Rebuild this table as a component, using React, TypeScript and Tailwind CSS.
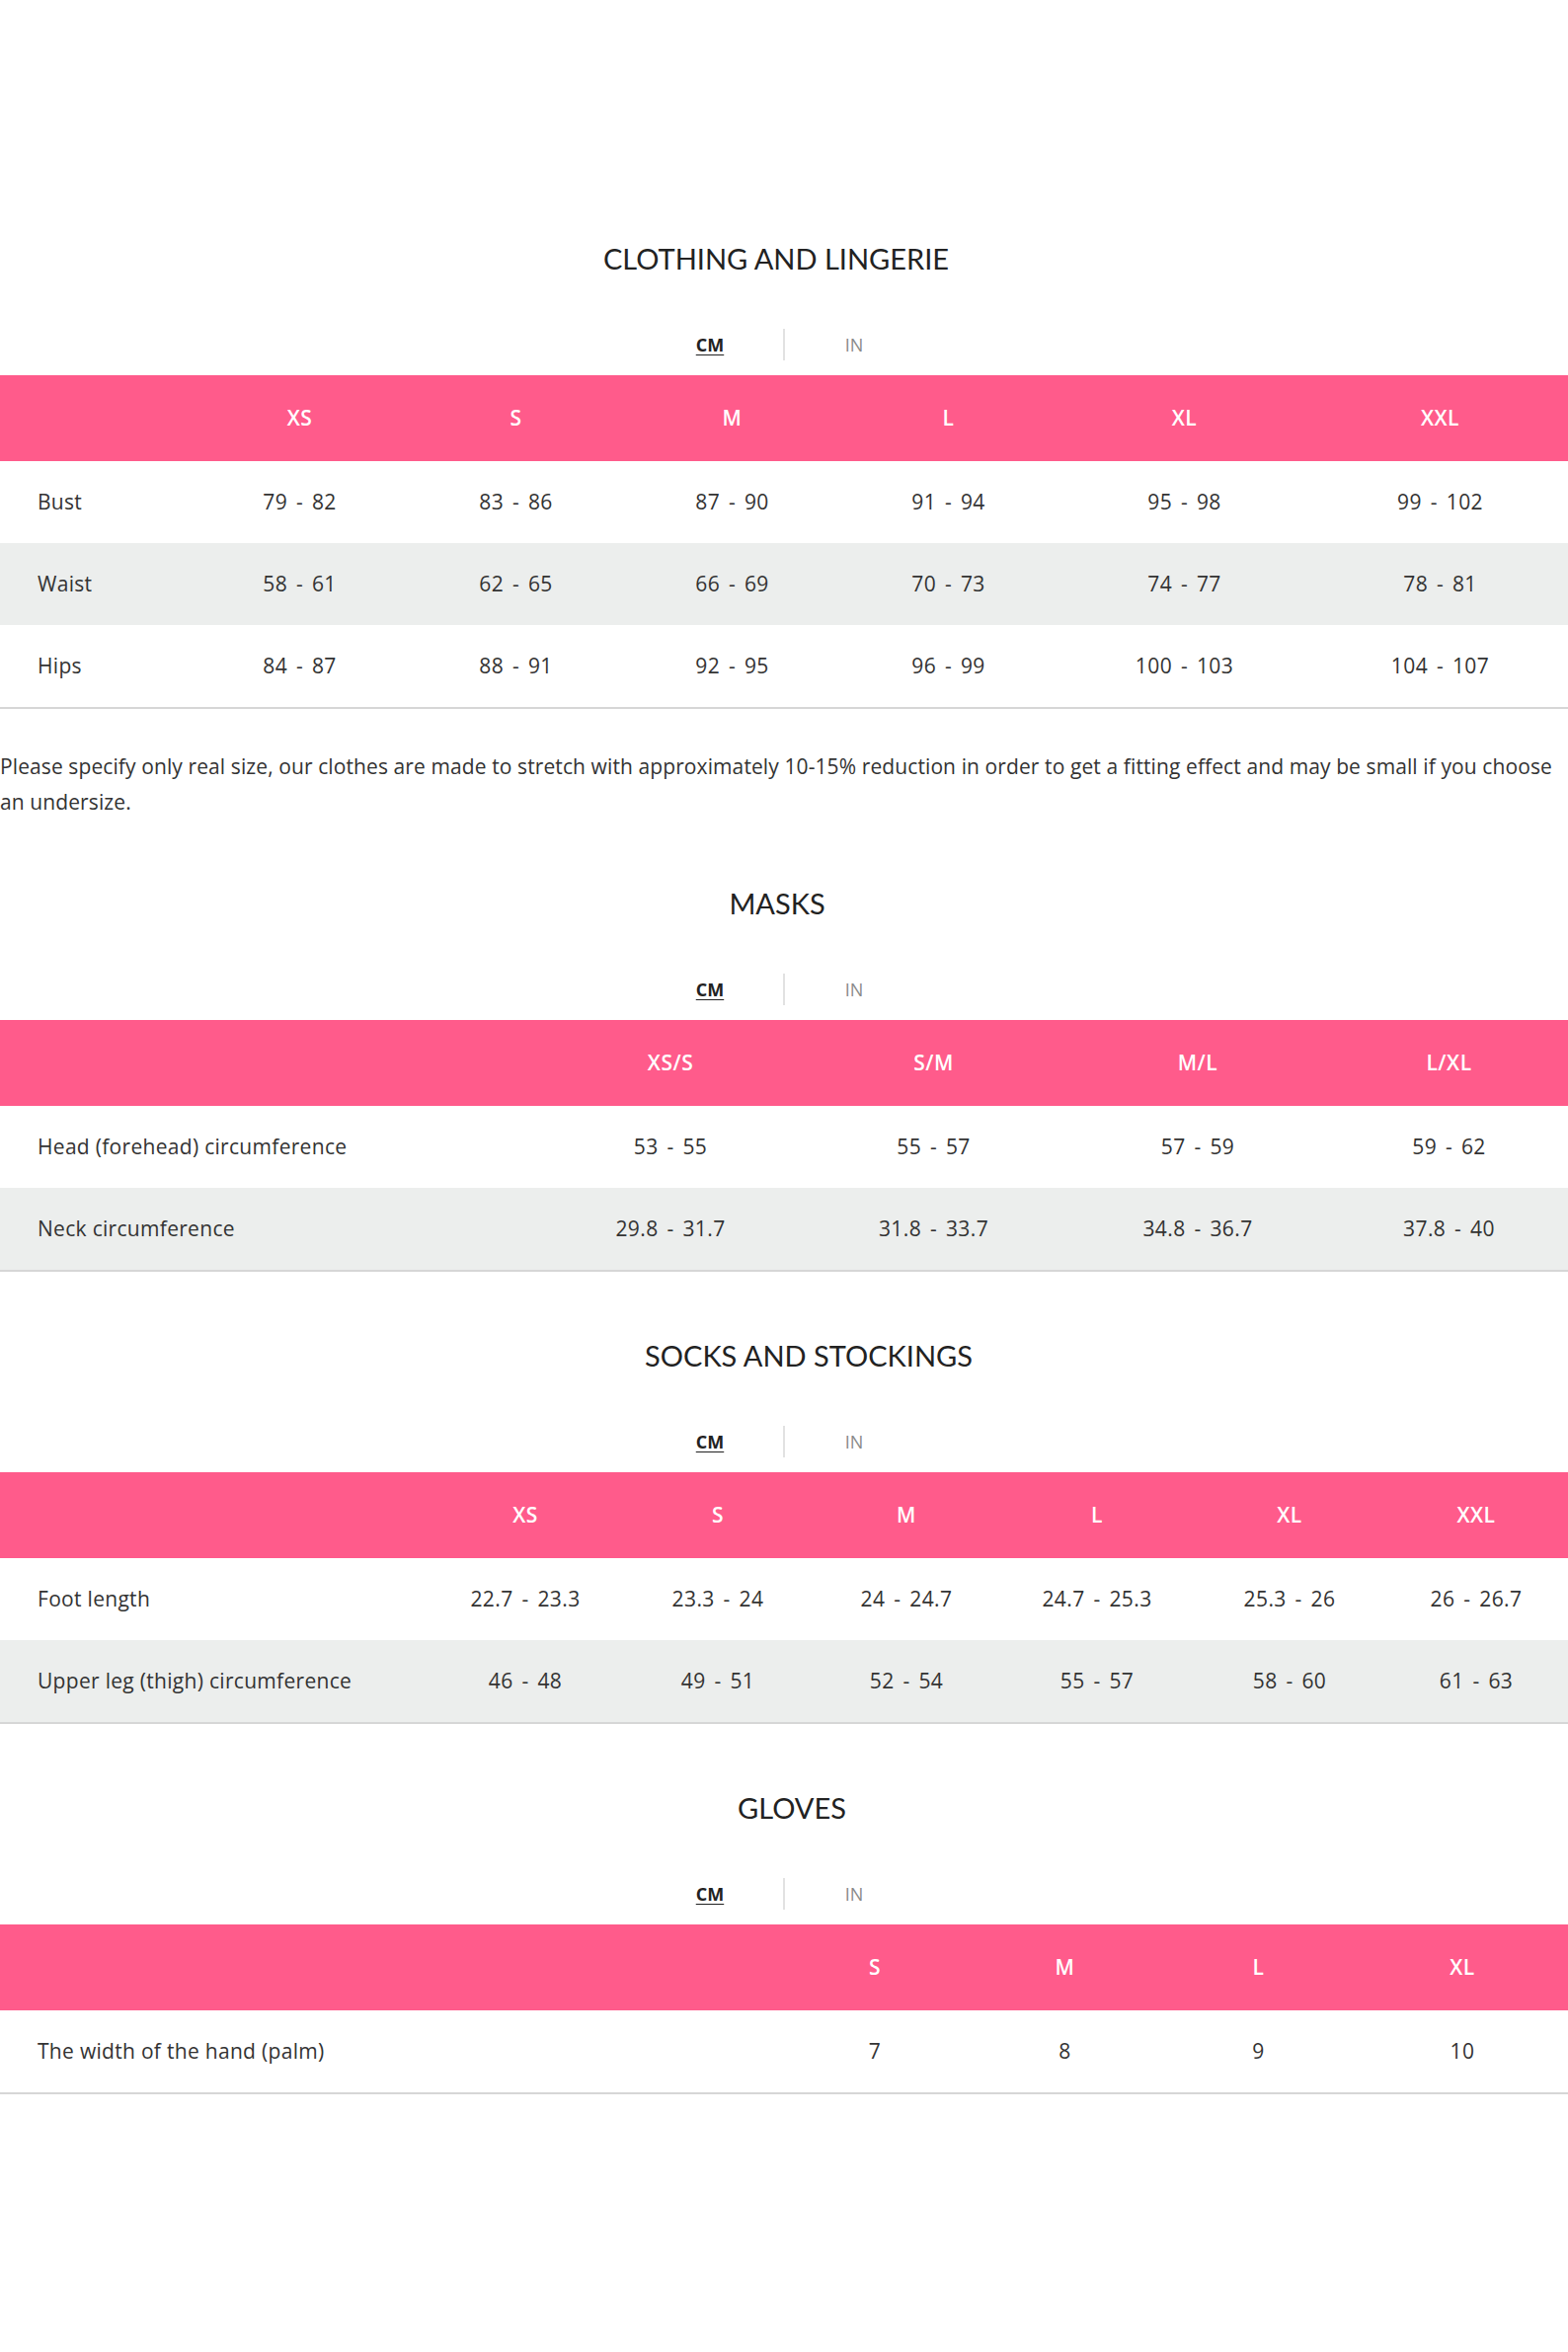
import React from "react";

type Section = {
  title: string;
  titleClass: string;
  cols: string;
  headers: string[];
  rows: { label: string; values: string[] }[];
  note?: boolean;
};

const sections: Section[] = [
  {
    title: "CLOTHING AND LINGERIE",
    titleClass: "pr-[16px]",
    cols: "grid-cols-[194px_219px_219px_219px_219px_259px_1fr]",
    headers: ["XS", "S", "M", "L", "XL", "XXL"],
    rows: [
      { label: "Bust", values: ["79 - 82", "83 - 86", "87 - 90", "91 - 94", "95 - 98", "99 - 102"] },
      { label: "Waist", values: ["58 - 61", "62 - 65", "66 - 69", "70 - 73", "74 - 77", "78 - 81"] },
      { label: "Hips", values: ["84 - 87", "88 - 91", "92 - 95", "96 - 99", "100 - 103", "104 - 107"] },
    ],
    note: true,
  },
  {
    title: "MASKS",
    titleClass: "pr-[14px]",
    cols: "grid-cols-[546px_266px_267px_268px_1fr]",
    headers: ["XS/S", "S/M", "M/L", "L/XL"],
    rows: [
      { label: "Head (forehead) circumference", values: ["53 - 55", "55 - 57", "57 - 59", "59 - 62"] },
      { label: "Neck circumference", values: ["29.8 - 31.7", "31.8 - 33.7", "34.8 - 36.7", "37.8 - 40"] },
    ],
  },
  {
    title: "SOCKS AND STOCKINGS",
    titleClass: "pl-[50px]",
    cols: "grid-cols-[434px_196px_194px_188px_198px_192px_1fr]",
    headers: ["XS", "S", "M", "L", "XL", "XXL"],
    rows: [
      { label: "Foot length", values: ["22.7 - 23.3", "23.3 - 24", "24 - 24.7", "24.7 - 25.3", "25.3 - 26", "26 - 26.7"] },
      { label: "Upper leg (thigh) circumference", values: ["46 - 48", "49 - 51", "52 - 54", "55 - 57", "58 - 60", "61 - 63"] },
    ],
  },
  {
    title: "GLOVES",
    titleClass: "pl-[16px]",
    cols: "grid-cols-[790px_192px_193px_199px_1fr]",
    headers: ["S", "M", "L", "XL"],
    rows: [{ label: "The width of the hand (palm)", values: ["7", "8", "9", "10"] }],
  },
];

function Toggle() {
  return (
    <div className="flex justify-center items-center h-[32px]">
      <div className="w-[148px] text-center text-[18px] font-bold text-[#222] underline underline-offset-[3px]">CM</div>
      <div className="w-[2px] h-[32px] bg-[#e2e2e2]" />
      <div className="w-[148px] pr-[8px] text-center text-[18px] text-[#8a8a8a]">IN</div>
    </div>
  );
}

function SizeTable({ s }: { s: Section }) {
  return (
    <div className="border-b-2 border-[#d6d6d6]">
      <div className={`grid ${s.cols} h-[87px] items-center bg-[#ff5b8b] text-white text-[21px] tracking-[0.5px] font-semibold`}>
        <div />
        {s.headers.map((h) => (
          <div key={h} className="text-center">
            {h}
          </div>
        ))}
      </div>
      {s.rows.map((r, i) => (
        <div
          key={r.label}
          className={`grid ${s.cols} h-[83px] items-center text-[21px] text-[#333] ${i % 2 === 1 ? "bg-[#eceeed]" : "bg-white"}`}
        >
          <div className="pl-[38px] whitespace-nowrap tracking-[0.3px]">{r.label}</div>
          {r.values.map((v, j) => (
            <div key={j} className="text-center whitespace-nowrap tracking-[0.4px] [word-spacing:3px]">
              {v}
            </div>
          ))}
        </div>
      ))}
    </div>
  );
}

export default function App() {
  return (
    <div
      className="w-[1588px] min-h-[2382px] bg-white pt-[246px]"
      style={{ fontFamily: "'Open Sans', 'Noto Sans', sans-serif" }}
    >
      {sections.map((s, idx) => (
        <section key={s.title} className={idx === 0 ? "" : "mt-[69px]"}>
          <h2
            className={`h-[32px] leading-[32px] text-center text-[29px] text-[#222] ${s.titleClass}`}
            style={{ fontFamily: "Lato, sans-serif" }}
          >
            {s.title}
          </h2>
          <div className="mt-[55px]">
            <Toggle />
          </div>
          <div className="mt-[15px]">
            <SizeTable s={s} />
          </div>
          {s.note && (
            <p className="mt-[40px] text-[21px] leading-[36px] tracking-[0.1px] text-[#333]">
              Please specify only real size, our clothes are made to stretch with approximately 10-15% reduction in order to get a fitting effect and may be small if you choose an undersize.
            </p>
          )}
        </section>
      ))}
    </div>
  );
}
